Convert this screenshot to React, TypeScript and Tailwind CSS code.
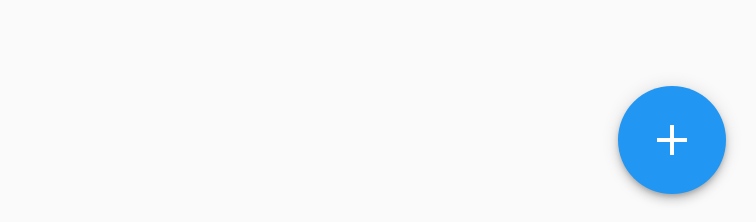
import React from "react";

export default function App() {
  return (
    <div className="w-[756px] h-[222px] bg-[#fafafa] flex items-end justify-end pr-[30px] pb-[28px]">
      <button className="w-[108px] h-[108px] rounded-full bg-[#2196f3] flex items-center justify-center shadow-[0_6px_10px_0_rgba(0,0,0,0.14),0_1px_18px_0_rgba(0,0,0,0.12),0_3px_5px_-1px_rgba(0,0,0,0.2)]">
        <svg width="30" height="30" viewBox="0 0 30 30">
          <rect x="13" y="0" width="4" height="30" fill="#ffffff" />
          <rect x="0" y="13" width="30" height="4" fill="#ffffff" />
        </svg>
      </button>
    </div>
  );
}
